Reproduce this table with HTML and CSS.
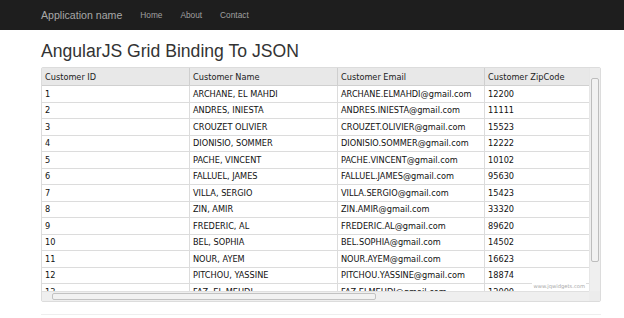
FILE: index.html
```html
<!DOCTYPE html>
<html>
<head>
<meta charset="utf-8">
<link rel="stylesheet" href="styles.css">
</head>
<body>
<nav class="navbar">
  <span class="brand">Application name</span>
  <ul class="nav">
    <li>Home</li>
    <li>About</li>
    <li>Contact</li>
  </ul>
</nav>
<main class="container">
  <h2 class="title">AngularJS Grid Binding To JSON</h2>
  <div class="grid">
    <div class="viewport">
      <div class="table">
        <div class="row head"><div>Customer ID</div><div>Customer Name</div><div>Customer Email</div><div>Customer ZipCode</div></div>
        <div class="row"><div>1</div><div>ARCHANE, EL MAHDI</div><div>ARCHANE.ELMAHDI@gmail.com</div><div>12200</div></div>
        <div class="row"><div>2</div><div>ANDRES, INIESTA</div><div>ANDRES.INIESTA@gmail.com</div><div>11111</div></div>
        <div class="row"><div>3</div><div>CROUZET OLIVIER</div><div>CROUZET.OLIVIER@gmail.com</div><div>15523</div></div>
        <div class="row"><div>4</div><div>DIONISIO, SOMMER</div><div>DIONISIO.SOMMER@gmail.com</div><div>12222</div></div>
        <div class="row"><div>5</div><div>PACHE, VINCENT</div><div>PACHE.VINCENT@gmail.com</div><div>10102</div></div>
        <div class="row"><div>6</div><div>FALLUEL, JAMES</div><div>FALLUEL.JAMES@gmail.com</div><div>95630</div></div>
        <div class="row"><div>7</div><div>VILLA, SERGIO</div><div>VILLA.SERGIO@gmail.com</div><div>15423</div></div>
        <div class="row"><div>8</div><div>ZIN, AMIR</div><div>ZIN.AMIR@gmail.com</div><div>33320</div></div>
        <div class="row"><div>9</div><div>FREDERIC, AL</div><div>FREDERIC.AL@gmail.com</div><div>89620</div></div>
        <div class="row"><div>10</div><div>BEL, SOPHIA</div><div>BEL.SOPHIA@gmail.com</div><div>14502</div></div>
        <div class="row"><div>11</div><div>NOUR, AYEM</div><div>NOUR.AYEM@gmail.com</div><div>16623</div></div>
        <div class="row"><div>12</div><div>PITCHOU, YASSINE</div><div>PITCHOU.YASSINE@gmail.com</div><div>18874</div></div>
        <div class="row"><div>13</div><div>FAZ, EL MEHDI</div><div>FAZ.ELMEHDI@gmail.com</div><div>12000</div></div>
      </div>
      <span class="watermark">www.jqwidgets.com</span>
    </div>
    <div class="vscroll">
      <div class="vbtn"></div>
      <div class="vthumb"></div>
    </div>
    <div class="hscroll">
      <div class="hbtn"></div>
      <div class="hthumb"></div>
    </div>
    <div class="corner"></div>
  </div>
  <hr class="rule">
</main>
</body>
</html>
```
FILE: styles.css
```css
html, body {
  margin: 0;
  padding: 0;
  background: #fff;
}
body {
  font-family: "Liberation Sans", Arial, sans-serif;
  color: #333;
}
.navbar {
  height: 30px;
  background: #1e1e1e;
  display: flex;
  align-items: center;
  padding-left: 41px;
}
.brand {
  font-size: 10.6px;
  color: #a8a8a8;
  margin-right: 18px;
  position: relative;
  top: 0px;
}
.nav {
  list-style: none;
  display: flex;
  margin: 0;
  padding: 0;
  gap: 0;
}
.nav li {
  font-size: 8.3px;
  color: #a0a0a0;
  margin-right: 18px;
}
.container {
  padding: 0 23px 0 41px;
}
.title {
  font-weight: normal;
  font-size: 17.6px;
  margin: 11px 0 6px;
  line-height: 20px;
  color: #333;
}
.grid {
  width: 560px;
  height: 235px;
  box-sizing: border-box;
  border: 1px solid #dcdcdc;
  border-radius: 2px;
  display: grid;
  grid-template-columns: 1fr 11px;
  grid-template-rows: 1fr 10px;
  background: #f4f4f4;
}
.viewport {
  overflow: hidden;
  position: relative;
  background: #fff;
}
.table {
  width: 592px;
  font-family: "DejaVu Sans", Verdana, sans-serif;
  font-size: 8.2px;
  color: #111;
}
.row {
  display: grid;
  grid-template-columns: 148px 148px 147px 149px;
  height: 16.5px;
}
.row > div {
  border-right: 1px solid #dcdcdc;
  border-bottom: 1px solid #dcdcdc;
  padding-left: 3px;
  display: flex;
  align-items: center;
  box-sizing: border-box;
  white-space: nowrap;
  overflow: hidden;
}
.row.head {
  height: 18px;
  background: #e8e8e8;
}
.row.head > div {
  border-bottom: 1px solid #d0d0d0;
  border-right: 1px solid #cfcfcf;
  color: #222;
}
.watermark {
  position: absolute;
  right: 3px;
  bottom: 2px;
  font-family: "DejaVu Sans", Verdana, sans-serif;
  font-size: 5.2px;
  color: #a8a8a8;
  background: #fff;
  padding: 0 1px;
}
.vscroll {
  background: #efefef;
  display: flex;
  flex-direction: column;
  border-left: 1px solid #e6e6e6;
}
.vbtn {
  height: 10px;
  background: #ececec;
}
.vthumb {
  height: 182px;
  margin: 0 1px;
  border: 1px solid #bdbdbd;
  border-radius: 2px;
  background: #f2f2f2;
}
.hscroll {
  background: #efefef;
  display: flex;
  border-top: 1px solid #e0e0e0;
}
.hbtn {
  width: 10px;
}
.hthumb {
  width: 322px;
  margin: 1px 0;
  border: 1px solid #c2c2c2;
  border-radius: 2px;
  background: #f2f2f2;
}
.corner {
  background: #ececec;
}
.rule {
  margin: 12px 0 0;
  border: 0;
  border-top: 1px solid #eeeeee;
  width: 560px;
}
```
